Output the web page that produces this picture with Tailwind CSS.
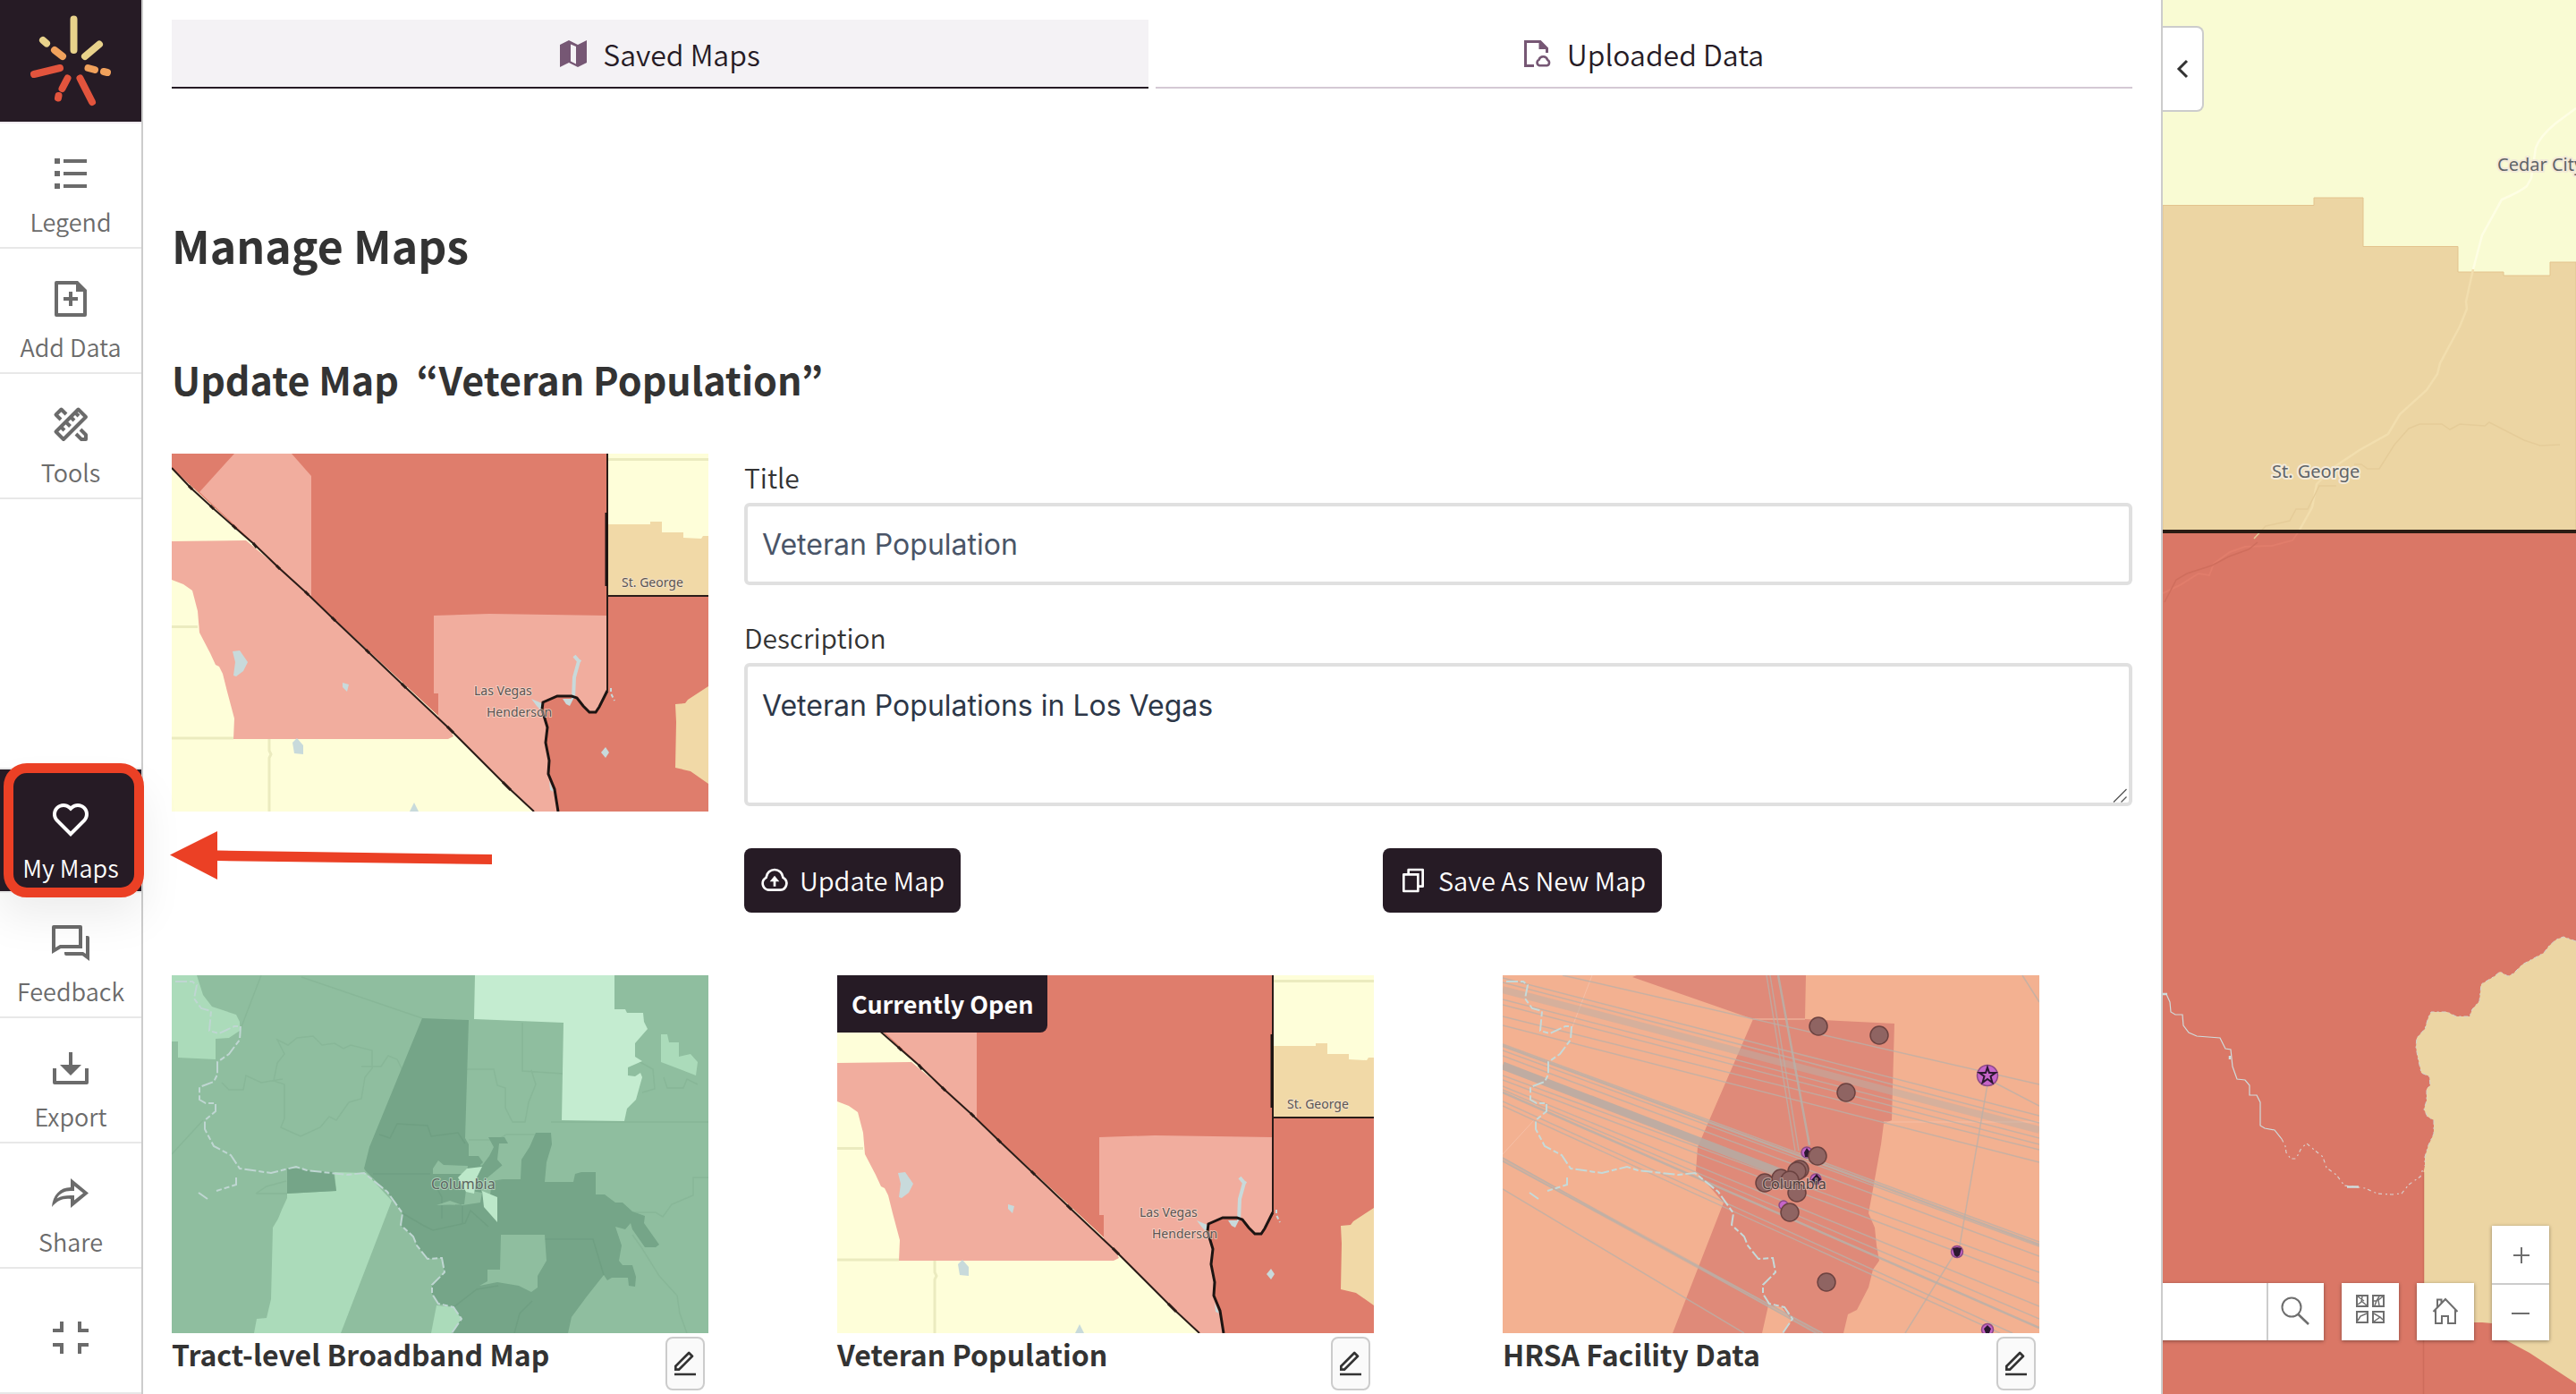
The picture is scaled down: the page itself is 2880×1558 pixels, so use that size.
<!DOCTYPE html>
<html lang="en">
<head>
<meta charset="utf-8">
<title>Manage Maps</title>
<script src="https://cdn.jsdelivr.net/npm/@tailwindcss/browser@4"></script>
</head>
<body class="bg-white text-[#333333] font-['Noto_Sans_CJK_KR',sans-serif]">

<!-- Shared drawings -->
<svg class="hidden" aria-hidden="true">
  <symbol id="edit" viewBox="0 0 24 24"><path d="M6.414 16L16.556 5.858l-1.414-1.414L5 14.586V16h1.414zm.829 2H3v-4.243L14.435 2.322a1 1 0 0 1 1.414 0l2.829 2.829a1 1 0 0 1 0 1.414L7.243 18zM3 20h18v2H3v-2z"/></symbol>
  <symbol id="veteran-map" viewBox="0 0 600 400">
    <rect width="600" height="400" fill="#fefed9"/>
    <path d="M0 193.500H29M0 318H69M109 318v14l2 4-2 4v60M487 6.500H600" fill="none" stroke="#ebebbf" stroke-width="3"/>
    <path d="M0 0H487V181H293V267H298V293L0 16z" fill="#df7d6c"/>
    <path d="M70 0H134L156 25V160L31 43z" fill="#f1ad9e"/>
    <path d="M0 98L83 97L119 127L219 221L311 308L315 316L309 319H69L70 296L62 266L57 246L53 238L49 236L43 223L31 200L29 176L23 153L13 146L0 141z" fill="#f1ad9e"/>
    <path d="M293 181L355 179L487 181V265L478 283L432 400H405L298 296V268H293z" fill="#f1ad9e"/>
    <path d="M487 159H600V400H432L428 375L421 358L422 343L418 323L420 306L414 286L415 278L431 271H447L453 273L467 289H474L478 283L487 265z" fill="#df7d6c"/>
    <path d="M487 79H535V76H548V88H572V94L592 95L594 92H600V159H487z" fill="#f1d9a7"/>
    <path d="M600 260L577 275L574 279L563 280L564 300L563 351L580 355L600 369z" fill="#f1d9a7"/>
    <g fill="#c8dadb">
      <path d="M68 221L76 220L85 233L80 243L72 249L69 248L71 233z"/>
      <path d="M191 256L198 258L196 266L191 261z"/>
      <path d="M135 323L140 318L147 326V336L137 335z"/>
      <path d="M271 390L276 400H266z"/>
      <path d="M485 328L489 334L485 340L480 334z"/>
      <path d="M402 274l14 6-4 6-4-4z"/>
      <path d="M437 274h12l-4 8-4-2z"/>
      <path d="M422 366l5 12-4-2z"/>
    </g>
    <path d="M450 226l5 6-5 18-1 24M457 233l-3-2" fill="none" stroke="#c8dadb" stroke-width="4"/>
    <path d="M491 262v6l4 8" fill="none" stroke="#c8dadb" stroke-width="2" stroke-dasharray="4 3"/>
    <path d="M0 16L21 38L45 60L70 82L93 102L119 127L151 156L181 185L219 221L259 259L311 308L376 373L405 400" fill="none" stroke="#2a1c18" stroke-width="2"/>
    <path d="M19 36l4 4M43 58l4 4M68 80l4 4M91 100l4 5M117 125l4 4M149 154l4 4M179 183l4 4M217 219l4 4M257 257l5 5M308 305l7 7M370 367l9 9" stroke="#2a1c18" stroke-width="3"/>
    <path d="M487 0V265M487 159H600" fill="none" stroke="#2a1c18" stroke-width="2"/>
    <path d="M486 66V148" stroke="#1c1412" stroke-width="3"/>
    <path d="M487 265L478 283L474 289H467L460 282L453 273L447 271H431L415 278L414 286L420 306L418 323L422 343L421 358L428 375L432 400" fill="none" stroke="#1c1412" stroke-width="3"/>
    <g font-family="Noto Sans, sans-serif" font-size="14" font-weight="400" fill="#5c5552" stroke="#f3e6dc" stroke-opacity=".6" stroke-width="2" stroke-linejoin="round" paint-order="stroke">
      <text x="503" y="149">St. George</text>
      <text x="338" y="270">Las Vegas</text>
      <text x="352" y="294">Henderson</text>
    </g>
  </symbol>
</svg>

<div class="flex h-screen overflow-hidden">

  <!-- Sidebar -->
  <nav class="relative z-10 flex w-40 shrink-0 flex-col border-r-2 border-[#cccccc] bg-white text-[27px] leading-10 font-[350] text-[#6b6b6b]">
    <a href="#" aria-label="Home" class="block border-b-2 border-[#f0ebf0] bg-[#261b25]">
      <svg viewBox="0 0 158 136" class="block w-full" fill="none" stroke-width="8" stroke-linecap="round">
        <path stroke="#e8d28b" d="M82.500 21.500V56M95 63L111 49.500M48 45L52 48.500"/>
        <path stroke="#f0a15c" d="M61 56L70 63M98.500 76L106 78M116 80L120 81"/>
        <path stroke="#e2543d" d="M38 83L67 76M75.500 87.500L69.500 99M65.500 107L65 109.500M89.500 87.500L103 114"/>
      </svg>
    </a>
    <button class="flex h-35 flex-col items-center gap-2.5 border-b-2 border-[#e8e8e8] pt-8">
      <svg viewBox="0 0 48 48" class="size-12" fill="#6b6b6b"><path d="M6 7h6v6H6zM6 21h6v6H6zM6 35h6v6H6zM16 8h26v4H16zM16 22h26v4H16zM16 36h26v4H16z"/></svg>
      <span>Legend</span>
    </button>
    <button class="flex h-35 flex-col items-center gap-2.5 border-b-2 border-[#e8e8e8] pt-8">
      <svg viewBox="0 0 48 48" class="size-12" fill="#6b6b6b"><path fill-rule="evenodd" d="M8 4h24l10 10v28a2 2 0 0 1-2 2H8a2 2 0 0 1-2-2V6a2 2 0 0 1 2-2zM10 8v32h28V16H30V8z"/><path d="M22 16h4v6h6v4h-6v6h-4v-6h-6v-4h6z"/></svg>
      <span>Add Data</span>
    </button>
    <button class="flex h-35 flex-col items-center gap-2.5 border-b-2 border-[#e8e8e8] pt-8">
      <svg viewBox="0 0 48 48" class="size-12" fill="none" stroke="#6b6b6b" stroke-width="4" stroke-linejoin="round"><path d="M32.500 7.500L41 16L16 41L7.500 32.500zM13 27l4 4M18.500 21.500l5 5M24 16l4 4M29 11l4 4"/><path d="M13 19L7.500 13.500L13.500 7.500L19 13M30 35l6 6h5v-5l-6-6"/></svg>
      <span>Tools</span>
    </button>

    <div class="mt-auto flex flex-col border-t-2 border-[#e8e8e8]">
      <button class="relative flex h-[138px] flex-col items-center gap-2.5 border-b-2 border-[#e8e8e8] bg-[#261b25] bg-clip-padding pt-8 text-white shadow-[0_25px_50px_0_rgba(0,0,0,0.08)]">
        <svg viewBox="0 0 24 24" class="size-12" fill="currentColor"><path d="M12.001 4.529c2.349-2.109 5.979-2.039 8.242.228 2.262 2.268 2.340 5.880.236 8.236l-8.480 8.492-8.478-8.492c-2.104-2.356-2.025-5.974.236-8.236 2.265-2.264 5.888-2.340 8.244-.228zm6.826 1.641c-1.500-1.502-3.920-1.563-5.490-.153l-1.335 1.198-1.336-1.197c-1.575-1.412-3.990-1.350-5.494.154-1.490 1.490-1.565 3.875-.192 5.451L12 18.654l7.020-7.030c1.374-1.577 1.299-3.959-.193-5.454z"/></svg>
        <span>My Maps</span>
        <span class="absolute -top-[7px] left-1 -right-[3px] -bottom-[7px] rounded-[26px] border-[11px] border-[#eb4025]"></span>
      </button>
      <button class="flex h-35 flex-col items-center gap-2.5 border-b-2 border-[#e8e8e8] pt-8">
        <svg viewBox="0 0 48 48" class="size-12" fill="#6b6b6b"><path fill-rule="evenodd" d="M5 4h30a2 2 0 0 1 2 2v24H13L3 36V6a2 2 0 0 1 2-2zM7 8v21l5-3h21V8z"/><path d="M41 16h2a2 2 0 0 1 2 2v26l-8-6H19a2 2 0 0 1-2-2v-2h21l3 2z"/></svg>
        <span>Feedback</span>
      </button>
      <button class="flex h-35 flex-col items-center gap-2.5 border-b-2 border-[#e8e8e8] pt-8">
        <svg viewBox="0 0 48 48" class="size-12" fill="#6b6b6b"><path d="M22 6h4v14h10L24 32L12 20h10z"/><path d="M4 24h4v14h32V24h4v16a2 2 0 0 1-2 2H6a2 2 0 0 1-2-2z"/></svg>
        <span>Export</span>
      </button>
      <button class="flex h-35 flex-col items-center gap-2.5 border-b-2 border-[#e8e8e8] pt-8">
        <svg viewBox="0 0 48 48" class="size-12" fill="#6b6b6b"><path fill-rule="evenodd" d="M24 7L44 23.500L24 40V30C15 29 9 32 3 39C4 26 12 17 24 17zM28 15.500V21H24C17 21 11.500 24 8.500 29.500C13 26.500 18 26 24 26H28V31.500L38 23.500z"/></svg>
        <span>Share</span>
      </button>
      <button aria-label="Exit full screen" class="flex h-35 flex-col items-center border-b-2 border-[#e8e8e8] pt-[53px]">
        <svg viewBox="0 0 24 24" class="size-12" fill="#6b6b6b"><path d="M18 7h4v2h-6V3h2v4zM8 9H2V7h4V3h2v6zm10 8v4h-2v-6h6v2h-4zM8 15v6H6v-4H2v-2h6z"/></svg>
      </button>
    </div>

    <!-- Callout arrow -->
    <svg viewBox="0 0 360 54" class="pointer-events-none absolute bottom-[575px] left-[190px] h-[54px] w-[360px]" fill="#eb4025"><path d="M0 26.500L53 0V21.500L360 26V37L53 33V54z"/></svg>
  </nav>

  <!-- Manage panel -->
  <main class="relative min-w-0 flex-1 border-r-2 border-[#cccccc] px-8 pt-[22px]">
    <div role="tablist" class="grid grid-cols-2 gap-2 text-[32px] leading-[44px] font-[350] text-[#261b25]">
      <button role="tab" aria-selected="true" class="flex h-[77px] items-center justify-center gap-[18px] border-b-2 border-[#261b25] bg-[#f4f2f5]">
        <svg viewBox="0 0 30 30" class="size-[30px]" fill="#765774"><path d="M0 5L10 0V25L0 30zM20 5L30 0V25L20 30z"/><path d="M10 0L20 5V30L10 25zM12 4.500V23.500L18 26.500V7z" fill-rule="evenodd"/></svg>
        Saved Maps
      </button>
      <button role="tab" aria-selected="false" class="flex h-[77px] items-center justify-center gap-[18px] border-b-2 border-[#d4c9d4]">
        <svg viewBox="0 0 30 30" class="size-[30px]" fill="none" stroke="#765774" stroke-width="3"><path d="M11 28.500H1.500V1.500H18L25.500 9V14"/><path d="M16.500 1.500V10H26.500L18 1.500z" fill="#765774" stroke="none"/><path d="M17 28.300a3.500 3.500 0 0 1-.5-6.500a5 5 0 0 1 9.600 0a3.500 3.500 0 0 1-.6 6.500z" stroke-width="2.600"/></svg>
        Uploaded Data
      </button>
    </div>

    <h1 class="mt-[142px] text-[50px] leading-[64px] font-bold">Manage Maps</h1>
    <h2 class="mt-[90px] text-[43px] leading-[56px] font-bold whitespace-pre">Update Map  “Veteran Population”</h2>

    <form class="mt-14 flex gap-10" onsubmit="return false">
      <svg viewBox="0 0 600 400" class="h-[400px] w-[600px] shrink-0" role="img" aria-label="Veteran Population map"><use href="#veteran-map"/></svg>
      <div class="flex min-w-0 flex-1 flex-col font-[350]">
        <label for="map-title" class="mb-[3px] text-[30px] leading-[52px]">Title</label>
        <input id="map-title" type="text" value="Veteran Population" class="h-[92px] rounded-md border-4 border-[#e0e0e0] px-4 font-[Inter,sans-serif] text-[32px] font-normal text-[#4a5568] outline-none">
        <label for="map-description" class="mt-8 mb-[3px] text-[30px] leading-[52px]">Description</label>
        <div class="relative">
          <textarea id="map-description" class="block h-40 w-full resize-none rounded-md border-4 border-[#e0e0e0] px-4 py-5 font-[Inter,sans-serif] text-[32px] leading-[48px] font-normal text-[#2d3748] outline-none">Veteran Populations in Los Vegas</textarea>
          <svg viewBox="0 0 16 16" class="pointer-events-none absolute right-1.5 bottom-1 size-4" fill="none" stroke="#555555" stroke-width="1.300"><path d="M1 15.500L15.500 1M9.500 15.500L15.500 9.500"/></svg>
        </div>
        <div class="mt-[47px] grid grid-cols-[46fr_54fr] justify-items-start">
          <button class="flex h-[72px] items-center gap-3 rounded-lg bg-[#261b25] px-[18px] text-[29px] text-white">
            <svg viewBox="0 0 24 24" class="size-8" fill="currentColor"><path d="M1 14.500a6.496 6.496 0 0 1 3.064-5.519 8.001 8.001 0 0 1 15.872 0 6.500 6.500 0 0 1-2.936 12L7 21c-3.356-.274-6-3.078-6-6.500zm15.848 4.487a4.500 4.500 0 0 0 2.030-8.309l-.807-.503-.12-.942a6.001 6.001 0 0 0-11.903 0l-.12.942-.805.503a4.500 4.500 0 0 0 2.029 8.309l.173.013h9.350l.173-.013zM13 13v4h-2v-4H8l4-5 4 5h-3z"/></svg>
            Update Map
          </button>
          <button class="flex h-[72px] items-center gap-3 rounded-lg bg-[#261b25] px-[18px] text-[29px] text-white">
            <svg viewBox="0 0 24 24" class="size-8" fill="currentColor"><path d="M7 6V3a1 1 0 0 1 1-1h12a1 1 0 0 1 1 1v14a1 1 0 0 1-1 1h-3v3c0 .552-.45 1-1.007 1H4.007A1.001 1.001 0 0 1 3 21l.003-14c0-.552.45-1 1.007-1H7zM5.003 8L5 20h10V8H5.003zM9 6h8v10h2V4H9v2z"/></svg>
            Save As New Map
          </button>
        </div>
      </div>
    </form>

    <section class="mt-[70px] flex gap-36 text-[32px] leading-[46px] font-bold">
      <article class="w-[600px] shrink-0">
        <svg viewBox="0 0 600 400" class="block w-full" role="img" aria-label="Broadband map">
          <rect width="600" height="400" fill="#8fbe9f"/>
          <g fill="none" stroke="#88b798" stroke-width="1.500">
            <path d="M145 2L280 48M100 0L77 60M0 200L35 162M330 105h30l4 18 9 3v22l8 16h14l4-22 8-20-5-16M392 53v54l46 3M424 164H600M332 184h32l10-6h32M600 226h-17v20l-24 10-10 14-8-5H515l-10 4"/>
            <path d="M118 72l8 16-8 10-4 20 12 4v38l-4 10 22 10 22-10 10-12 8 4 14-20 14-4 4-24 8-10V84l-24-6-8 4-10-6-14 2-10-10-18 2-10 8zM56 120l8 8h16l3-16 17 8 24-4M212 102h22l8-12 10 4 6 12M94 244l12-8 22-6M95 244h34M515 290l10 14 20 32 20 22 3 20 8 22M520 95l18 10 2 22-14 4M550 114l4 12h18l4-10 12 6"/>
          </g>
          <path d="M0 0H28L35 22L45 35L72 44L76 52V62L64 70L49 71V94L7 92V74H0z" fill="#abdbba"/>
          <path d="M339 0H495V38H507L509 42H527L528 52L532 60L518 76V91L526 96L510 103V112L518 113L524 109L526 114L519 139L509 149L506 163L436 162L438 53L338 49z" fill="#c4ecd0"/>
          <path d="M547 66H554L556 75H567V91L580 88L588 97L586 112L547 97z" fill="#abdbba"/>
          <path d="M129 244L184 241L182 220L217 221L246 252L189 400H92L95 384L106 383L111 362L113 282L119 272L123 262L129 249z" fill="#abdbba"/>
          <path d="M129 216H141L151 218L181 220L184 241L129 244z" fill="#75a588"/>
          <path d="M296 369L315 371L324 384L313 400H290z" fill="#abdbba"/>
          <path d="M280 48L332 50L328 182L332 189V202H343L348 209L346 214L355 202L360 192L354 181H372L376 188H366L364 206L370 213V228H390L391 206L400 192L407 176H424L425 189L419 209L417 231H449L451 222L458 220H474V245H484L496 254H504L515 264L529 269L528 277L545 301L541 304H529L515 284L513 277L507 284L496 281L503 302L500 319L504 324H515L519 337L518 348L511 347L510 338H492L487 341L483 335L464 359L447 382L443 400H313L324 384L315 371L298 367L291 356V346L305 332L302 316L286 317L274 302L270 292L255 279L258 266L241 242L217 219L215 216L221 192z" fill="#75a588"/>
          <path d="M232 178l12 4 8-16 34 2 4 12 30-4 8 12M225 222h64M258 266l24 14 10 5 36-8 6-14 20 18M417 295l54 0 6 20 6 20M315 371l26-20 24-4M383 400l6-22 14-14M292 230l10 18v24M325 258v20" fill="none" stroke="#6f9f82" stroke-width="1.500"/>
          <g fill="#8fbe9f">
            <path d="M292 216L298 207L304 212L331 213L330 222H292z"/>
            <path d="M332 189l20-4 4 12-10 16-14-12zM346 232l24-20v16l-12 2-2 16-10-4z"/>
            <path d="M296 257L311 252L325 257L345 254L347 243L329 240L327 256z"/>
            <path d="M368 290H417L419 319L409 336V349L402 354L388 347L364 343L344 347L353 342V329H367z"/>
          </g>
          <path d="M332 202h11l5 7-6 6-10-2z" fill="#75a588"/>
          <path d="M330 216L347 214L341 226L338 244L329 242L320 226zM347 241L364 248V276L349 259z" fill="#bce8c9"/>
          <path d="M4 7H23L28 11L25 26L33 37L44 40L42 62L53 65L70 57H77L76 72L64 88L51 97V111L47 119L31 125V139L38 143H49V152L37 162V172L47 191L66 201L76 216L111 221L139 214L151 218L196 223L215 221L241 242L258 266L256 279L270 292L274 302L286 317L302 316L305 332L291 346V356L298 367L315 371L324 384L313 400M72 226v8l-22 7M30 243l10 7" fill="none" stroke="#bfd6d2" stroke-width="2" stroke-dasharray="13 3 6 3"/>
          <text x="290" y="239" font-family="Noto Sans, sans-serif" font-size="16" font-weight="400" fill="#5c6660" stroke="#c9e2d0" stroke-opacity=".7" stroke-width="2" stroke-linejoin="round" paint-order="stroke">Columbia</text>
        </svg>
        <div class="flex items-start justify-between pr-1">
          <h3>Tract-level Broadband Map</h3>
          <button aria-label="Edit Tract-level Broadband Map" class="mt-1 flex h-[60px] w-11 items-center justify-center rounded-lg border-2 border-[#cccccc] bg-[#fafafa]"><svg class="size-8 fill-[#333333]"><use href="#edit"/></svg></button>
        </div>
      </article>

      <article class="w-[600px] shrink-0">
        <div class="relative">
          <svg viewBox="0 0 600 400" class="block w-full" role="img" aria-label="Veteran Population map"><use href="#veteran-map"/></svg>
          <span class="absolute top-0 left-0 flex h-16 items-center rounded-br-lg bg-[#261b25] px-4 text-[27px] text-white">Currently Open</span>
        </div>
        <div class="flex items-start justify-between pr-1">
          <h3>Veteran Population</h3>
          <button aria-label="Edit Veteran Population" class="mt-1 flex h-[60px] w-11 items-center justify-center rounded-lg border-2 border-[#cccccc] bg-[#fafafa]"><svg class="size-8 fill-[#333333]"><use href="#edit"/></svg></button>
        </div>
      </article>

      <article class="w-[600px] shrink-0">
        <svg viewBox="0 0 600 400" class="block w-full" role="img" aria-label="Facility map">
          <rect width="600" height="400" fill="#f3b191"/>
          <path d="M145 2L150 0H339L338 49L438 54L435 162L426 166L423 189L414 239L409 266L416 282L418 302L421 319L414 329L409 349L396 374L386 379L381 400H314L323 386L312 371L297 369L290 400H190L247 254L216 219L218 192L280 49z" fill="#df8a79"/>
          <path d="M426 164H600M0 200L35 162M100 0L77 60M280 49h58" fill="none" stroke="#f5bfa6" stroke-width="1"/>
          <g fill="none" stroke="#b9b0a8" stroke-opacity=".75" stroke-width="1.500">
            <path d="M67 0L600 122M0 3L600 157M0 8L600 165M0 27L600 182M0 33L600 189M0 46L600 195M0 56L600 209"/>
            <path d="M0 77L600 298M0 84L600 303M0 90L600 314M0 112L600 332M0 117L600 344M0 124L600 370M0 128L600 384M0 141L570 400M0 146L556 400"/>
            <path d="M0 204L350 400M0 208L358 400M0 239L270 400M295 0L327 196M299 0L331 196"/>
            <path d="M542 122L511 302L450 400M548 119L600 146M581 0L600 30"/>
          </g>
          <path d="M308 0L343 190M0 79L600 301M0 131L600 394" stroke="#b9b0a8" stroke-opacity=".85" stroke-width="2.500" fill="none"/>
          <path d="M0 16L600 173" stroke="#b9b0a8" stroke-opacity=".5" stroke-width="8"/>
          <path d="M0 101L312 221" stroke="#b5aca5" stroke-opacity=".85" stroke-width="9"/>
          <path d="M0 206L354 400" stroke="#b9b0a8" stroke-opacity=".5" stroke-width="4"/>
          <path d="M4 7H23L28 11L25 26L33 37L44 40L42 62L53 65L70 57H77L76 72L64 88L51 97V111L47 119L31 125V139L38 143H49V152L37 162V172L47 191L66 201L76 216L111 221L139 214L151 218L196 223L215 221L241 242L258 266L256 279L270 292L274 302L286 317L302 316L305 332L291 346V356L298 367L315 371L324 384L313 400M72 226v8l-22 7M30 243l10 7" fill="none" stroke="#c5dad9" stroke-width="2" stroke-dasharray="13 3 6 3"/>
          <g fill="#c565c9" stroke="#8d4a86" stroke-width="1.500">
            <circle cx="542" cy="112" r="11.500"/><circle cx="508" cy="309" r="6.500"/><circle cx="542" cy="396" r="6.500"/><circle cx="340" cy="198" r="6"/><circle cx="350" cy="228" r="6"/><circle cx="314" cy="257" r="5"/>
          </g>
          <path d="M542 103l2 6h7l-5.500 4 2 7-5.500-4-5.500 4 2-7-5.500-4h7z" fill="#c565c9" stroke="#2b1830" stroke-width="2"/>
          <path d="M508 304l5 1-2 8-3 2-3-2-2-8zM542 391l4 4-2 5h-4l-2-5zM340 193l4 5-2 5h-4l-1-5zM351 222l5 6-4 6h-4l-3-5z" fill="#2b1830"/>
          <g fill="#8f6462" stroke="#6b4240" stroke-width="1.500">
            <circle cx="353" cy="57" r="10"/><circle cx="421" cy="67" r="10"/><circle cx="384" cy="131" r="10"/><circle cx="352" cy="202" r="10"/><circle cx="332" cy="217" r="10"/><circle cx="329" cy="219" r="10"/><circle cx="293" cy="232" r="10"/><circle cx="311" cy="227" r="10"/><circle cx="321" cy="229" r="10"/><circle cx="329" cy="243" r="10"/><circle cx="321" cy="265" r="10"/><circle cx="362" cy="343" r="10"/>
          </g>
          <text x="290" y="239" font-family="Noto Sans, sans-serif" font-size="16" font-weight="400" fill="#4f3f3e" stroke="#dcc3bd" stroke-opacity=".7" stroke-width="2" stroke-linejoin="round" paint-order="stroke">Columbia</text>
        </svg>
        <div class="flex items-start justify-between pr-1">
          <h3>HRSA Facility Data</h3>
          <button aria-label="Edit HRSA Facility Data" class="mt-1 flex h-[60px] w-11 items-center justify-center rounded-lg border-2 border-[#cccccc] bg-[#fafafa]"><svg class="size-8 fill-[#333333]"><use href="#edit"/></svg></button>
        </div>
      </article>
    </section>

    <button aria-label="Collapse panel" class="absolute top-[29px] left-full z-10 ml-0.5 flex h-24 w-[46px] items-center justify-center rounded-r-lg border-2 border-l-0 border-[#cccccc] bg-white">
      <svg viewBox="0 0 24 24" class="size-6" fill="none" stroke="#333333" stroke-width="3"><path d="M17 3L8 12L17 21"/></svg>
    </button>
  </main>

  <!-- Map -->
  <section class="relative w-[462px] shrink-0 overflow-hidden bg-[#da7766]" aria-label="Map">
    <svg viewBox="0 0 462 1558" preserveAspectRatio="xMinYMin slice" class="absolute inset-0 size-full">
      <rect width="462" height="1558" fill="#da7766"/>
      <path d="M0 0H462V320H0z" fill="#f9fbd3"/>
      <path d="M0 229.500H169V221H224V275.500H330V304H381V308H433V293H462V594H0z" fill="#ecd5a3" stroke="#e3c38e" stroke-width="1"/>
      <path d="M462 121L439 138Q422 152 417 165L412 199L407 208Q400 214 379 223L357 263L347 301" fill="none" stroke="#fefee4" stroke-width="2.500"/>
      <path d="M347 301L339 337L340 345L332 365L310 406L307 418L295 436L265 463L252 485L220 503L190 523L172 541L167 567L152 594" fill="none" stroke="#f2deae" stroke-width="2.500"/>
      <path d="M152 594L145 604L122 610L92 611L75 617L57 630L52 643L40 641L19 654L0 663" fill="none" stroke="#e17d6b" stroke-width="2"/>
      <path d="M444 497L422 498L404 492L365 472L360 476L332 474L321 480L312 474H287L275 479L259 497L242 524H229L222 519H214M194 543H175L162 569H149L142 582L115 588L102 602" fill="none" stroke="#e5cc99" stroke-width="1.500"/>
      <path d="M106 606L96 614L74 622L55 632L27 641L15 648L2 673" fill="none" stroke="#cf6e5d" stroke-width="1.500"/>
      <path d="M462 1052L448 1047L440 1050L432 1057L426 1065L402 1078L392 1088L386 1091L377 1086L371 1091L356 1100L354 1119L346 1128L343 1136H328L318 1131H300L297 1137L293 1150L284 1160L283 1170L285 1181L289 1199L298 1203L299 1213L295 1217V1230L292 1240L296 1248L303 1252V1267L297 1280L293 1293V1303L291.500 1310V1478H357L368 1479L384 1498L410 1512L462 1546z" fill="#ecd5a3"/>
      <path d="M291.500 1310V1558" stroke="#cd6c5b" stroke-width="1.500"/>
      <path d="M462 1052L448 1047L440 1050L432 1057L426 1065L402 1078L392 1088L386 1091L377 1086L371 1091L356 1100L354 1119L346 1128L343 1136H328L318 1131H300L297 1137L293 1150L284 1160L283 1170L285 1181L289 1199L298 1203L299 1213L295 1217V1230L292 1240L296 1248L303 1252V1267L297 1280L293 1293V1303" fill="none" stroke="#d3d6cf" stroke-width="1" stroke-dasharray="5 3 2 3"/>
      <path d="M0 1111H4L8 1120L9 1131L14 1134H22L23 1146L29 1154L38 1158L64 1160L70 1172L76 1173L78 1192L83 1206L92 1207L97 1213V1224H105L109 1232V1258L114 1261L125 1263L133 1273" fill="none" stroke="#cfdcdc" stroke-width="1.200"/>
      <path d="M133 1273L137 1281L138 1288L143 1295H149L155 1283L161 1278L168 1284L179 1293L183 1305L194 1313L203 1325L219 1327L226 1328L240 1334L256 1335L267 1334L275 1324L288 1315L291 1306" fill="none" stroke="#d9cdca" stroke-width="1.200" stroke-dasharray="4 4 2 3"/>
      <path d="M206 1326.500h13M0 1111h5M75 1180v4" stroke="#cfdcdc" stroke-width="2.500"/>
      <path d="M0 594H462" stroke="#2a1c14" stroke-width="4"/>
      <g font-family="Noto Sans, sans-serif" font-size="20" fill="#5f6468" stroke="#f3ead9" stroke-width="4" stroke-linejoin="round" paint-order="stroke">
        <text x="374" y="191">Cedar City</text>
        <text x="122" y="534">St. George</text>
      </g>
    </svg>

    <div class="absolute right-[30px] bottom-[60px] flex items-end gap-5">
      <div class="flex h-16 bg-white shadow-[0_1px_4px_rgba(0,0,0,0.4)]">
        <input type="search" aria-label="Find address or place" class="w-[480px] bg-white px-4 text-[28px] outline-none">
        <button aria-label="Search" class="w-16 border-l-2 border-[#cccccc]"><svg viewBox="0 0 62 64" class="block h-16 w-[62px]" fill="none" stroke="#6e6e6e" stroke-width="2"><circle cx="26" cy="27" r="10.500"/><path d="M33.500 35L45 46" stroke-width="2.500"/></svg></button>
      </div>
      <button aria-label="Basemap gallery" class="size-16 bg-white shadow-[0_1px_4px_rgba(0,0,0,0.4)]">
        <svg viewBox="0 0 64 64" class="size-16" fill="none" stroke="#6e6e6e" stroke-width="2"><path d="M17 14h12v12H17zM35 14h12v12H35zM17 32h12v12H17zM35 32h12v12H35z"/><path d="M18 24l4-3 1-6M22 20l6 5M18 15l7 5M46 15l-5 4 1 6M36 20h3l3-5M37 25l2-5M18 42l3-5 7-3M36 34l7 4-7 5M43 38l3 3" stroke-width="1.500"/></svg>
      </button>
      <button aria-label="Default map view" class="size-16 bg-white shadow-[0_1px_4px_rgba(0,0,0,0.4)]">
        <svg viewBox="0 0 64 64" class="size-16" fill="none" stroke="#6e6e6e" stroke-width="2"><path d="M18.500 32L32 18L45.500 32M21 30V45H28V37H35V45H43V30M23 27V18.500H27.500V22.500"/></svg>
      </button>
      <div class="flex flex-col bg-white shadow-[0_1px_4px_rgba(0,0,0,0.4)]">
        <button aria-label="Zoom in" class="size-16"><svg viewBox="0 0 64 64" class="size-16" fill="none" stroke="#6e6e6e" stroke-width="2"><path d="M24 33H42M33 24V42"/></svg></button>
        <button aria-label="Zoom out" class="h-16 w-16 border-t-2 border-[#cccccc]"><svg viewBox="0 0 64 62" class="h-[62px] w-16" fill="none" stroke="#6e6e6e" stroke-width="2"><path d="M22 32H42"/></svg></button>
      </div>
    </div>
  </section>
</div>
</body>
</html>
